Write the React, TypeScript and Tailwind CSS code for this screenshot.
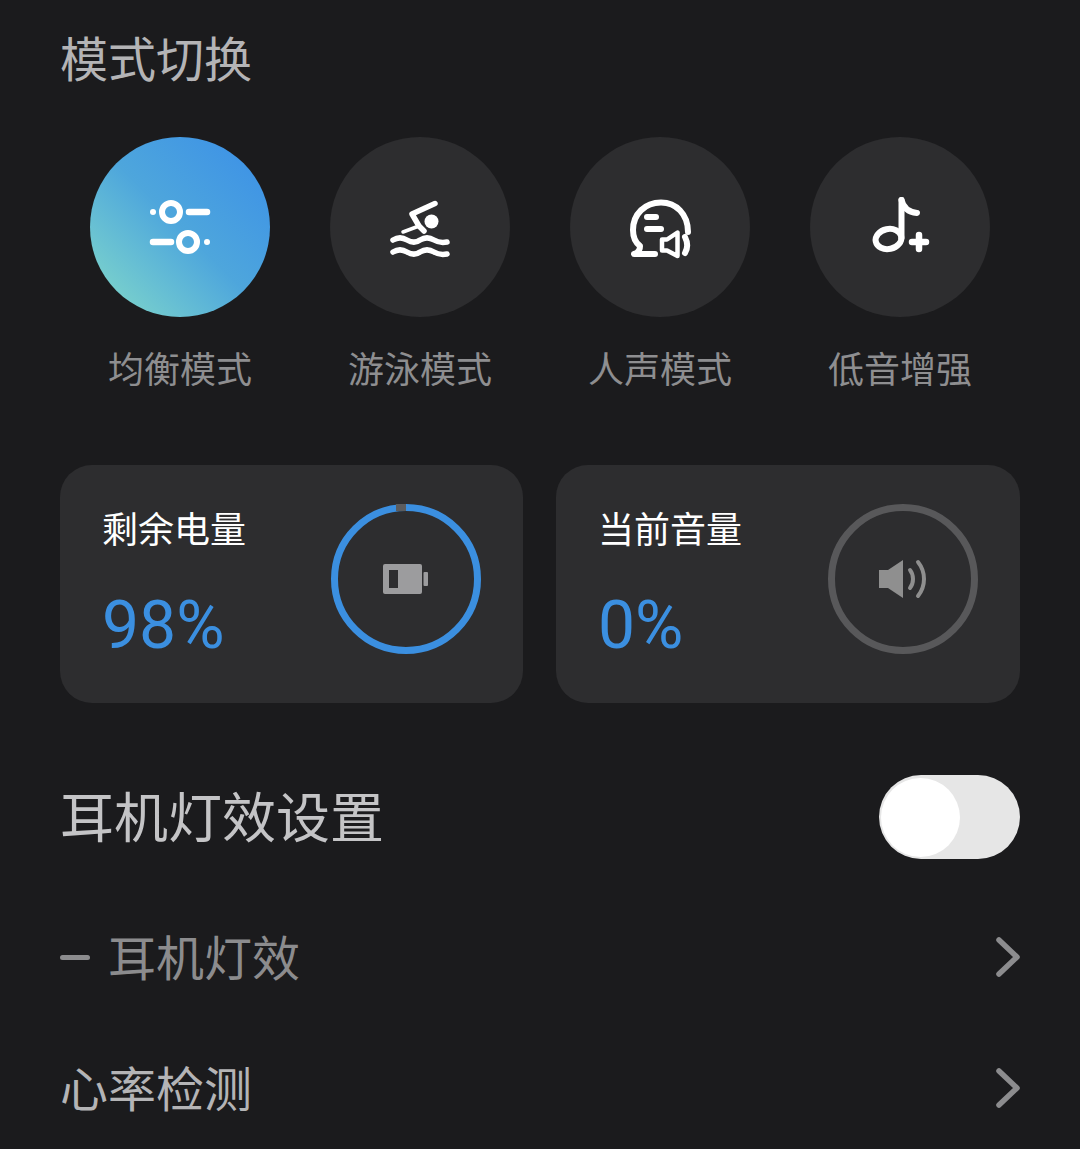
const FONT = "font-['Noto_Sans_CJK_SC','Noto_Sans',sans-serif]";

function SlidersIcon() {
  return (
    <svg width="180" height="180" viewBox="90 137 180 180" fill="none" stroke="#fff" strokeLinecap="round">
      <circle cx="153" cy="212" r="3" fill="#fff" stroke="none" />
      <circle cx="171" cy="212" r="9" strokeWidth="6" />
      <path d="M189 212H207" strokeWidth="6.500" />
      <path d="M153 242H171" strokeWidth="6.500" />
      <circle cx="188" cy="242" r="9" strokeWidth="6" />
      <circle cx="207" cy="242" r="3" fill="#fff" stroke="none" />
    </svg>
  );
}

function SwimIcon() {
  return (
    <svg width="180" height="180" viewBox="330 137 180 180" fill="none" stroke="#fff" strokeLinecap="round" strokeLinejoin="round">
      <circle cx="431.500" cy="221.500" r="7" fill="#fff" stroke="none" />
      <path d="M435 203.500L412 214L419 226L424 231" strokeWidth="5.500" />
      <path d="M403 232L419 226" strokeWidth="3.500" />
      <path d="M393 240C398 237 402 237 407 240C412 243 416 243 420 240C425 237 429 237 434 240C439 243 442 243 447 242" strokeWidth="5.500" />
      <path d="M393 252C398 249 402 249 407 252C412 255 416 255 420 252C425 249 429 249 434 252C439 255 442 255 447 254" strokeWidth="5.500" />
    </svg>
  );
}

function VoiceIcon() {
  return (
    <svg width="180" height="180" viewBox="570 137 180 180" fill="none" stroke="#fff" strokeLinecap="round" strokeLinejoin="round">
      <path d="M688 232C688 214 676 202.500 661 202.500C645 202.500 633 214 633 230C633 238 636 243 640 246C640 250 638 253 634 254H655" strokeWidth="6" />
      <path d="M647 217H656" strokeWidth="6" />
      <path d="M647 229H661" strokeWidth="6" />
      <path d="M662 239.500H667L677.500 232.500V256L667 250.500H662Z" strokeWidth="4.500" />
      <path d="M685 237C688 243 688 248 685 253" strokeWidth="6" />
    </svg>
  );
}

function NoteIcon() {
  return (
    <svg width="180" height="180" viewBox="810 137 180 180" fill="none" stroke="#fff" strokeLinecap="round" strokeLinejoin="round">
      <path d="M901.500 200V238" strokeWidth="6" />
      <path d="M901.500 200C903 207 908 212 917 213" strokeWidth="6" />
      <ellipse cx="888.500" cy="239" rx="13" ry="10" transform="rotate(-12 888.500 239)" strokeWidth="6" />
      <path d="M912 242H926M919 235V249" strokeWidth="6.500" />
    </svg>
  );
}

function BatteryRing() {
  return (
    <svg width="150" height="150" viewBox="0 0 150 150" fill="none">
      <circle cx="75" cy="75" r="71.500" stroke="#3b8fe0" strokeWidth="7" />
      <rect x="65" y="0" width="10" height="7" fill="#5c5c5e" />
      <rect x="52" y="60" width="39" height="30" rx="2" fill="#9c9c9e" />
      <rect x="58" y="66" width="9" height="18" fill="#2d2d2f" />
      <rect x="92.500" y="68" width="4.500" height="14" rx="1" fill="#9c9c9e" />
    </svg>
  );
}

function VolumeRing() {
  return (
    <svg width="150" height="150" viewBox="0 0 150 150" fill="none">
      <circle cx="75" cy="75" r="71.500" stroke="#58585a" strokeWidth="7" />
      <path d="M51 66H60L75 56V94L60 84H51Z" fill="#8f8f8f" />
      <path d="M82 66C86 71 86 79 82 84" stroke="#8f8f8f" strokeWidth="4" strokeLinecap="round" />
      <path d="M90 58C98 68 98 82 90 92" stroke="#8f8f8f" strokeWidth="4" strokeLinecap="round" />
    </svg>
  );
}

function Chevron() {
  return (
    <svg width="24" height="40" viewBox="0 0 24 40" fill="none" stroke="#8c8c8e" strokeWidth="5.500" strokeLinecap="round" strokeLinejoin="round">
      <path d="M3 3L21 20L3 37" />
    </svg>
  );
}

function Mode({ label, active, children }: { label: string; active?: boolean; children: React.ReactNode }) {
  return (
    <div className="flex flex-col items-center">
      <div
        className={
          active
            ? "w-[180px] h-[180px] rounded-full bg-gradient-to-tr from-[#86dcc6] via-[#4ea6dc] to-[#3b8ee8]"
            : "w-[180px] h-[180px] rounded-full bg-[#2d2d2f]"
        }
      >
        {children}
      </div>
      <div className="mt-[32px] mb-[3px] text-[36px] leading-[36px] text-[#8e8e90]">{label}</div>
    </div>
  );
}

function Card({ title, value, width, children }: { title: string; value: string; width: string; children: React.ReactNode }) {
  return (
    <div className={`${width} h-[238px] rounded-[32px] bg-[#2d2d2f] px-[42px] flex justify-between`}>
      <div className="pt-[44px]">
        <div className="text-[36px] leading-[36px] text-white">{title}</div>
        <div className="mt-[49px] text-[66px] leading-[64px] text-[#3b8fe0] font-['Roboto',sans-serif]">{value}</div>
      </div>
      <div className="mt-[39px]">{children}</div>
    </div>
  );
}

export default function App() {
  return (
    <div className={`w-[1080px] h-[1149px] overflow-hidden bg-[#1b1b1d] px-[60px] pt-[32px] ${FONT}`}>
      <div className="text-[48px] leading-[48px] text-[#b4b4b6]">模式切换</div>

      <div className="mt-[57px] grid grid-cols-4">
        <Mode label="均衡模式" active><SlidersIcon /></Mode>
        <Mode label="游泳模式"><SwimIcon /></Mode>
        <Mode label="人声模式"><VoiceIcon /></Mode>
        <Mode label="低音增强"><NoteIcon /></Mode>
      </div>

      <div className="mt-[77px] flex gap-[33px]">
        <Card title="剩余电量" value="98%" width="w-[463px]"><BatteryRing /></Card>
        <Card title="当前音量" value="0%" width="w-[464px]"><VolumeRing /></Card>
      </div>

      <div className="mt-[72px] flex items-center justify-between">
        <div className="pb-[4px] text-[54px] leading-[54px] text-[#c4c4c6]">耳机灯效设置</div>
        <div className="w-[141px] h-[84px] rounded-full bg-[#e6e6e6] flex items-center pl-[2px]">
          <div className="w-[79px] h-[79px] rounded-full bg-white" />
        </div>
      </div>

      <div className="mt-[74px] h-[48px] flex items-center justify-between">
        <div className="flex items-center">
          <div className="w-[30px] h-[5px] rounded-sm bg-[#8c8c8e]" />
          <div className="ml-[18px] pb-[4px] text-[48px] leading-[48px] text-[#8c8c8e]">耳机灯效</div>
        </div>
        <Chevron />
      </div>

      <div className="mt-[83px] h-[48px] flex items-center justify-between">
        <div className="pb-[4px] text-[48px] leading-[48px] text-[#b4b4b6]">心率检测</div>
        <Chevron />
      </div>
    </div>
  );
}
